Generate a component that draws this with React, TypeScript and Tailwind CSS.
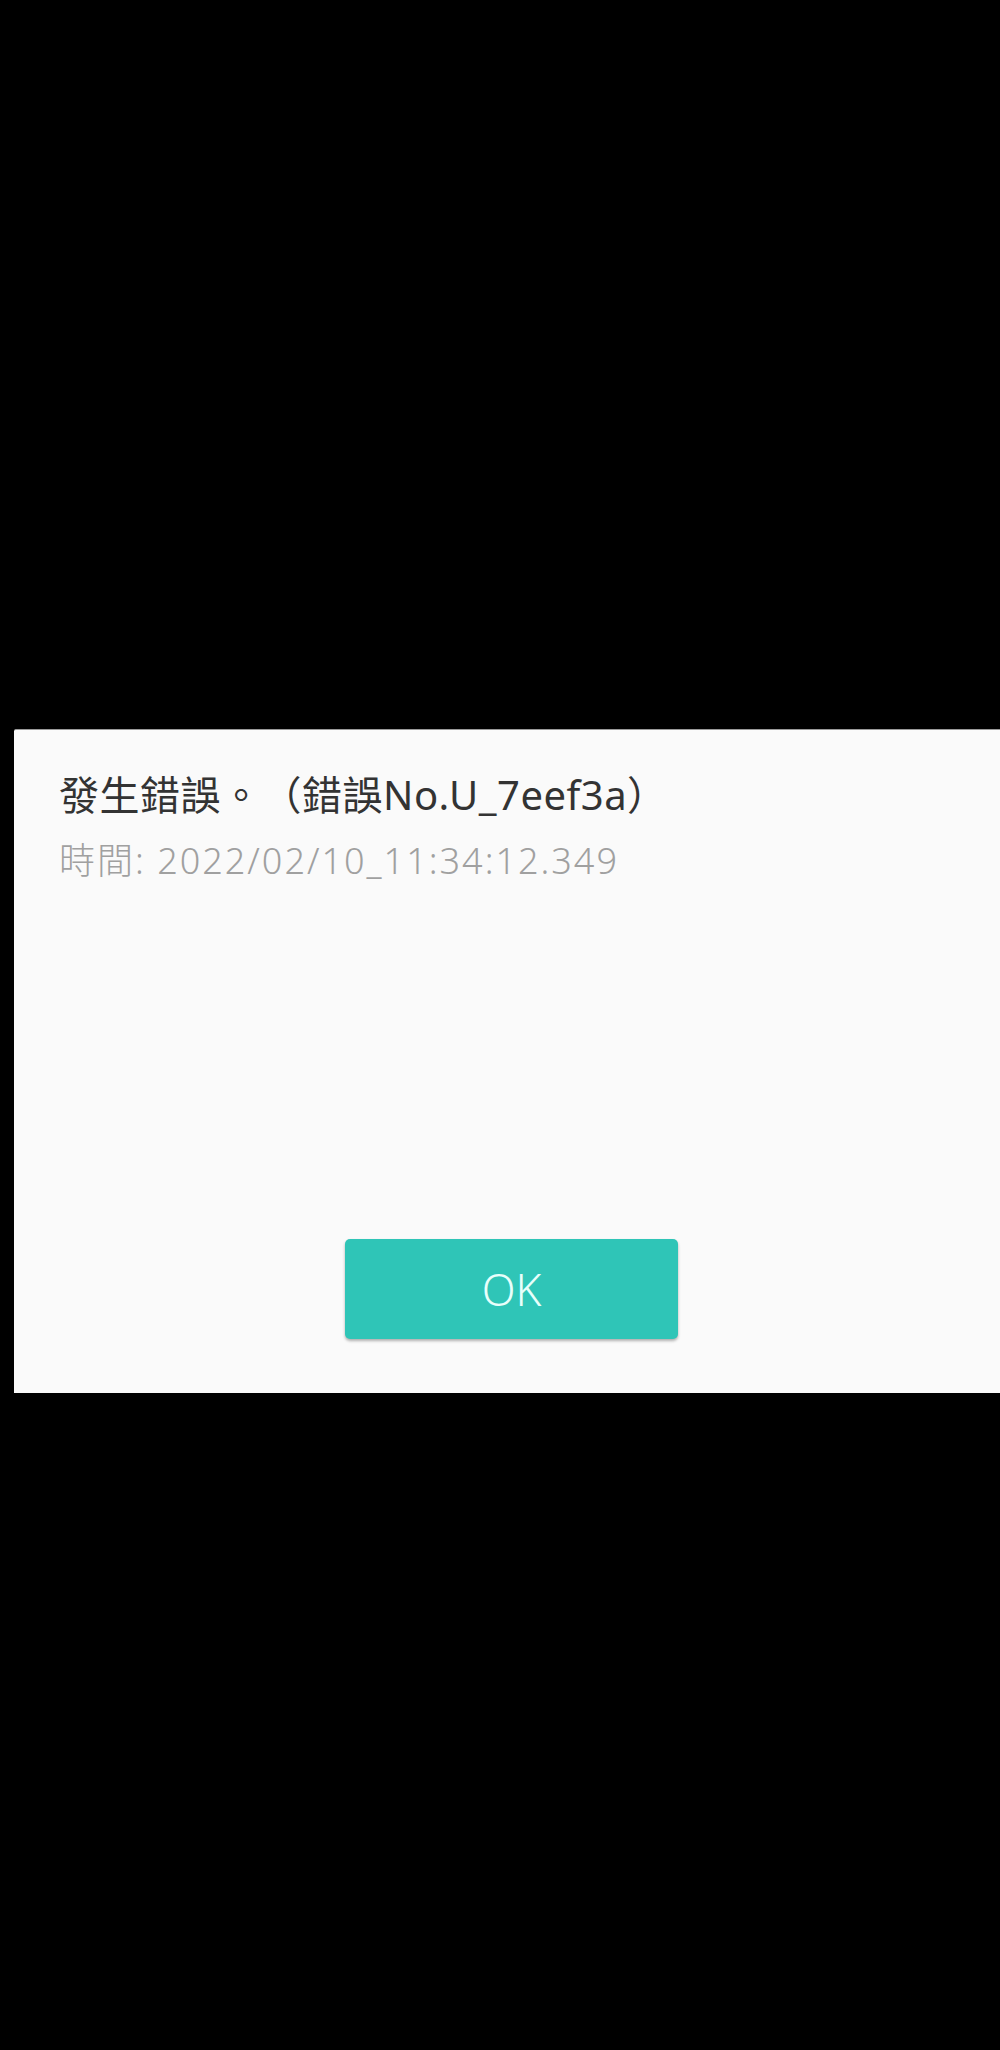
export default function App() {
  return (
    <div className="w-[1000px] h-[2050px] bg-black flex flex-col overflow-hidden">
      <div className="mt-[729px] ml-[14px] w-[986px] h-[664px] bg-[#fafafa] border-t border-[#9a9a9a] rounded-tl-[2px] flex flex-col pl-[45px] pt-[39px]">
        <p
          className="text-[40px] leading-[52px] tracking-[0.5px] text-[#333333] whitespace-nowrap [text-spacing-trim:space-all]"
          style={{ fontFamily: '"Noto Sans", "Noto Sans CJK TC", sans-serif' }}
        >
          發生錯誤。（錯誤No.U_7eef3a）
        </p>
        <p
          className="mt-[17px] text-[36px] leading-[46px] tracking-[2px] font-light text-[#a0a0a0] whitespace-nowrap"
          style={{ fontFamily: '"Noto Sans", "Noto Sans CJK TC", sans-serif' }}
        >
          時間: 2022/02/10_11:34:12.349
        </p>
        <div className="flex-1" />
        <div className="flex justify-center pr-[36px] mb-[54px]">
          <button
            className="w-[333px] h-[100px] rounded-[5px] bg-[#2fc5b7] text-[#e8fffb] text-[44px] font-light shadow-[0_2px_3px_rgba(0,0,0,0.3)]"
            style={{ fontFamily: '"Noto Sans", sans-serif' }}
          >
            OK
          </button>
        </div>
      </div>
    </div>
  );
}
